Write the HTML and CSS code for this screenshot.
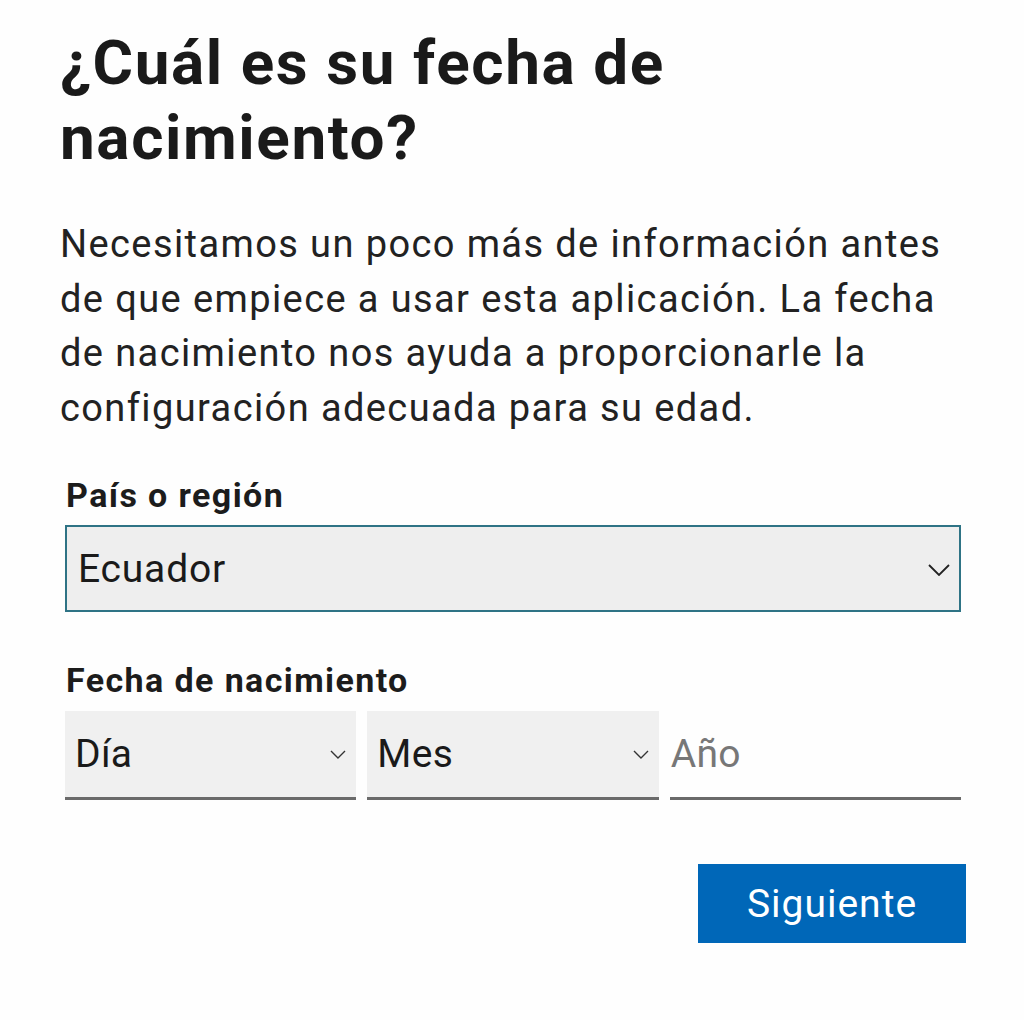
FILE: index.html
```html
<!DOCTYPE html>
<html lang="es">
<head>
<meta charset="utf-8">
<title>Fecha de nacimiento</title>
<link rel="stylesheet" href="styles.css">
</head>
<body>
<main class="page">
  <h1 class="title">¿Cuál es su fecha de nacimiento?</h1>
  <p class="intro">Necesitamos un poco más de información antes de que empiece a usar esta aplicación. La fecha de nacimiento nos ayuda a proporcionarle la configuración adecuada para su edad.</p>

  <div class="form">
    <div class="label">País o región</div>
    <div class="country">
      <span class="value">Ecuador</span>
      <svg class="chev-lg" viewBox="0 0 22 12" width="22" height="12"><path d="M1 1 L11 11 L21 1" fill="none" stroke="#222" stroke-width="1.8"/></svg>
    </div>

    <div class="label label-date">Fecha de nacimiento</div>
    <div class="date-row">
      <div class="dsel">
        <span class="value">Día</span>
        <svg class="chev-sm" viewBox="0 0 16 9" width="16" height="9"><path d="M1 1 L8 8 L15 1" fill="none" stroke="#333" stroke-width="1.4"/></svg>
      </div>
      <div class="dsel">
        <span class="value">Mes</span>
        <svg class="chev-sm" viewBox="0 0 16 9" width="16" height="9"><path d="M1 1 L8 8 L15 1" fill="none" stroke="#333" stroke-width="1.4"/></svg>
      </div>
      <div class="dinput">
        <span class="placeholder">Año</span>
      </div>
    </div>

    <div class="actions">
      <div class="btn">Siguiente</div>
    </div>
  </div>
</main>
</body>
</html>
```

FILE: styles.css
```css
html, body {
  margin: 0;
  padding: 0;
  background: #fefefe;
}

body {
  font-family: Roboto, "Noto Sans", sans-serif;
  color: #1c1c1c;
  width: 1024px;
  height: 1020px;
  overflow: hidden;
}

.page {
  padding: 25px 0 0 60px;
  width: 901px;
}

.title {
  margin: 0;
  font-size: 62px;
  line-height: 75px;
  font-weight: 700;
  letter-spacing: 1.6px;
  color: #1a1a1a;
  width: 700px;
}

.intro {
  margin: 42px 0 0 0;
  font-size: 38px;
  line-height: 54.5px;
  font-weight: 400;
  letter-spacing: 1.4px;
  color: #222;
  width: 910px;
}

.form {
  padding-left: 5px;
  width: 896px;
}

.label {
  margin-top: 40px;
  padding-left: 1px;
  font-size: 34px;
  line-height: 40px;
  font-weight: 700;
  letter-spacing: 1.4px;
  color: #1c1c1c;
}

.country {
  margin-top: 10px;
  height: 83px;
  border: 2px solid #2e7385;
  background: #eeeeee;
  display: flex;
  align-items: center;
  justify-content: space-between;
  padding: 0 9px 0 11px;
}

.country .value {
  font-size: 39px;
  letter-spacing: 0.8px;
  color: #1a1a1a;
}

.chev-lg {
  margin-top: 2px;
}

.label-date {
  margin-top: 48px;
}

.date-row {
  margin-top: 11px;
  display: grid;
  grid-template-columns: 1fr 1fr 1fr;
  column-gap: 11px;
}

.dsel, .dinput {
  height: 86px;
  border-bottom: 3px solid #6a6a6a;
  display: flex;
  align-items: center;
  justify-content: space-between;
  padding: 0 10px 0 10px;
}

.dsel {
  background: #f0f0f0;
}

.dinput {
  background: transparent;
  padding-left: 1px;
}

.dsel .value {
  font-size: 39px;
  letter-spacing: 0.3px;
  color: #1a1a1a;
}

.placeholder {
  font-size: 39px;
  letter-spacing: 0.3px;
  color: #777;
}

.chev-sm {
  margin-top: 0;
}

.actions {
  margin-top: 64px;
  display: flex;
  justify-content: flex-end;
  margin-right: -5px;
}

.btn {
  width: 268px;
  height: 79px;
  background: #0067b8;
  color: #fff;
  font-size: 39px;
  letter-spacing: 1px;
  display: flex;
  align-items: center;
  justify-content: center;
}
```
